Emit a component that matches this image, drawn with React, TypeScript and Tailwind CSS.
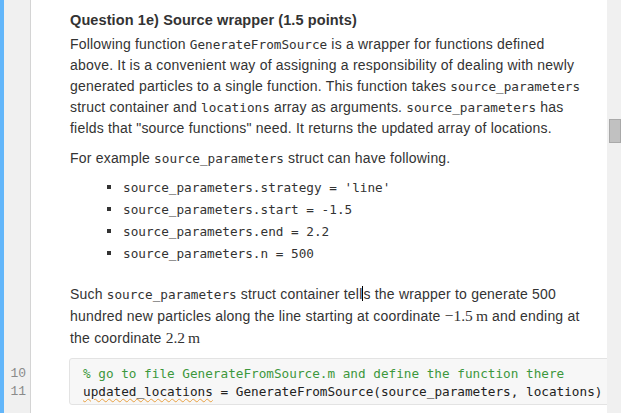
import React from "react";

const mono = "font-['DejaVu_Sans_Mono','Liberation_Mono',monospace] text-[12.7px] tracking-normal";

function C({ children }: { children: React.ReactNode }) {
  return <code className={mono}>{children}</code>;
}

function M({ children }: { children: React.ReactNode }) {
  return <span className="font-['Liberation_Serif',serif] text-[15.5px] tracking-normal">{children}</span>;
}

export default function App() {
  const items = [
    "source_parameters.strategy = 'line'",
    "source_parameters.start = -1.5",
    "source_parameters.end = 2.2",
    "source_parameters.n = 500",
  ];
  return (
    <div className="flex h-[413px] w-[621px] overflow-hidden bg-white font-['Liberation_Sans',Arial,sans-serif] text-[14px] text-[#333]">
      <div className="w-[4px] shrink-0 bg-[#62b6fa]" />
      <div className="flex min-w-0 flex-1 flex-col">
        {/* text row */}
        <div className="flex">
          <div className="w-[27px] shrink-0 border-r border-[#d4d4d4] bg-[#f0f0f0]" />
          <div className="min-w-0 flex-1 pl-[39px] pr-[4px] pt-[10px] leading-[21px] tracking-[0.2px]">
            <h3 className="font-bold text-[14.5px] tracking-[0.1px]">Question 1e) Source wrapper (1.5 points)</h3>
            <p className="mt-[3px]">
              Following function <C>GenerateFromSource</C> is a wrapper for functions defined
              <br />
              above. It is a convenient way of assigning a responsibility of dealing with newly
              <br />
              generated particles to a single function. This function takes <C>source_parameters</C>
              <br />
              struct container and <C>locations</C> array as arguments. <C>source_parameters</C> has
              <br />
              fields that "source functions" need. It returns the updated array of locations.
            </p>
            <p className="mt-[9px]">
              For example <C>source_parameters</C> struct can have following.
            </p>
            <ul className="mt-[7px] pl-[37px]">
              {items.map((t) => (
                <li key={t} className="flex h-[22px] items-center">
                  <span className="mr-[12px] h-[4px] w-[4px] bg-[#333]" />
                  <C>{t}</C>
                </li>
              ))}
            </ul>
            <p className="mt-[20px]">
              Such <C>source_parameters</C> struct container tell
              <span className="inline-block h-[15px] w-0 border-l border-black align-[-2px]" />s the wrapper to
              generate 500
              <br />
              hundred new particles along the line starting at coordinate <M>−1.5&#8201;m</M> and ending at
              <br />
              the coordinate <M>2.2&#8201;m</M>
            </p>
          </div>
        </div>
        {/* code row */}
        <div className="flex">
          <div className="w-[27px] shrink-0 border-r border-[#d4d4d4] bg-[#f0f0f0] pt-[16px] pr-[4px] text-right font-['Liberation_Mono',monospace] text-[13px] leading-[18px] text-[#8a8a8a]">
            <div>10</div>
            <div>11</div>
          </div>
          <div className="min-w-0 flex-1 overflow-hidden pl-[38px] pt-[9px]">
            <div className={`w-[600px] rounded-[3px] border border-[#e3e3e3] bg-[#f7f7f7] pl-[13px] pt-[6px] pb-[3px] leading-[18px] whitespace-pre ${mono}`}>
              <div className="text-[#3d983d]">% go to file GenerateFromSource.m and define the function there</div>
              <div className="text-[#222]">
                <span className="underline decoration-wavy decoration-[#e8a040] decoration-1 underline-offset-[2px]">updated_locations</span>
                {" = GenerateFromSource(source_parameters, locations)"}
              </div>
            </div>
          </div>
        </div>
        <div className="flex flex-1">
          <div className="w-[27px] shrink-0 border-r border-[#d4d4d4] bg-[#f0f0f0]" />
          <div className="flex-1" />
        </div>
      </div>
      <div className="w-[14px] shrink-0 bg-[#f0f0f0] pl-[2px] pt-[119px]">
        <div className="h-[24px] w-full border border-[#a9a9a9] bg-[#c1c1c1]" />
      </div>
    </div>
  );
}
